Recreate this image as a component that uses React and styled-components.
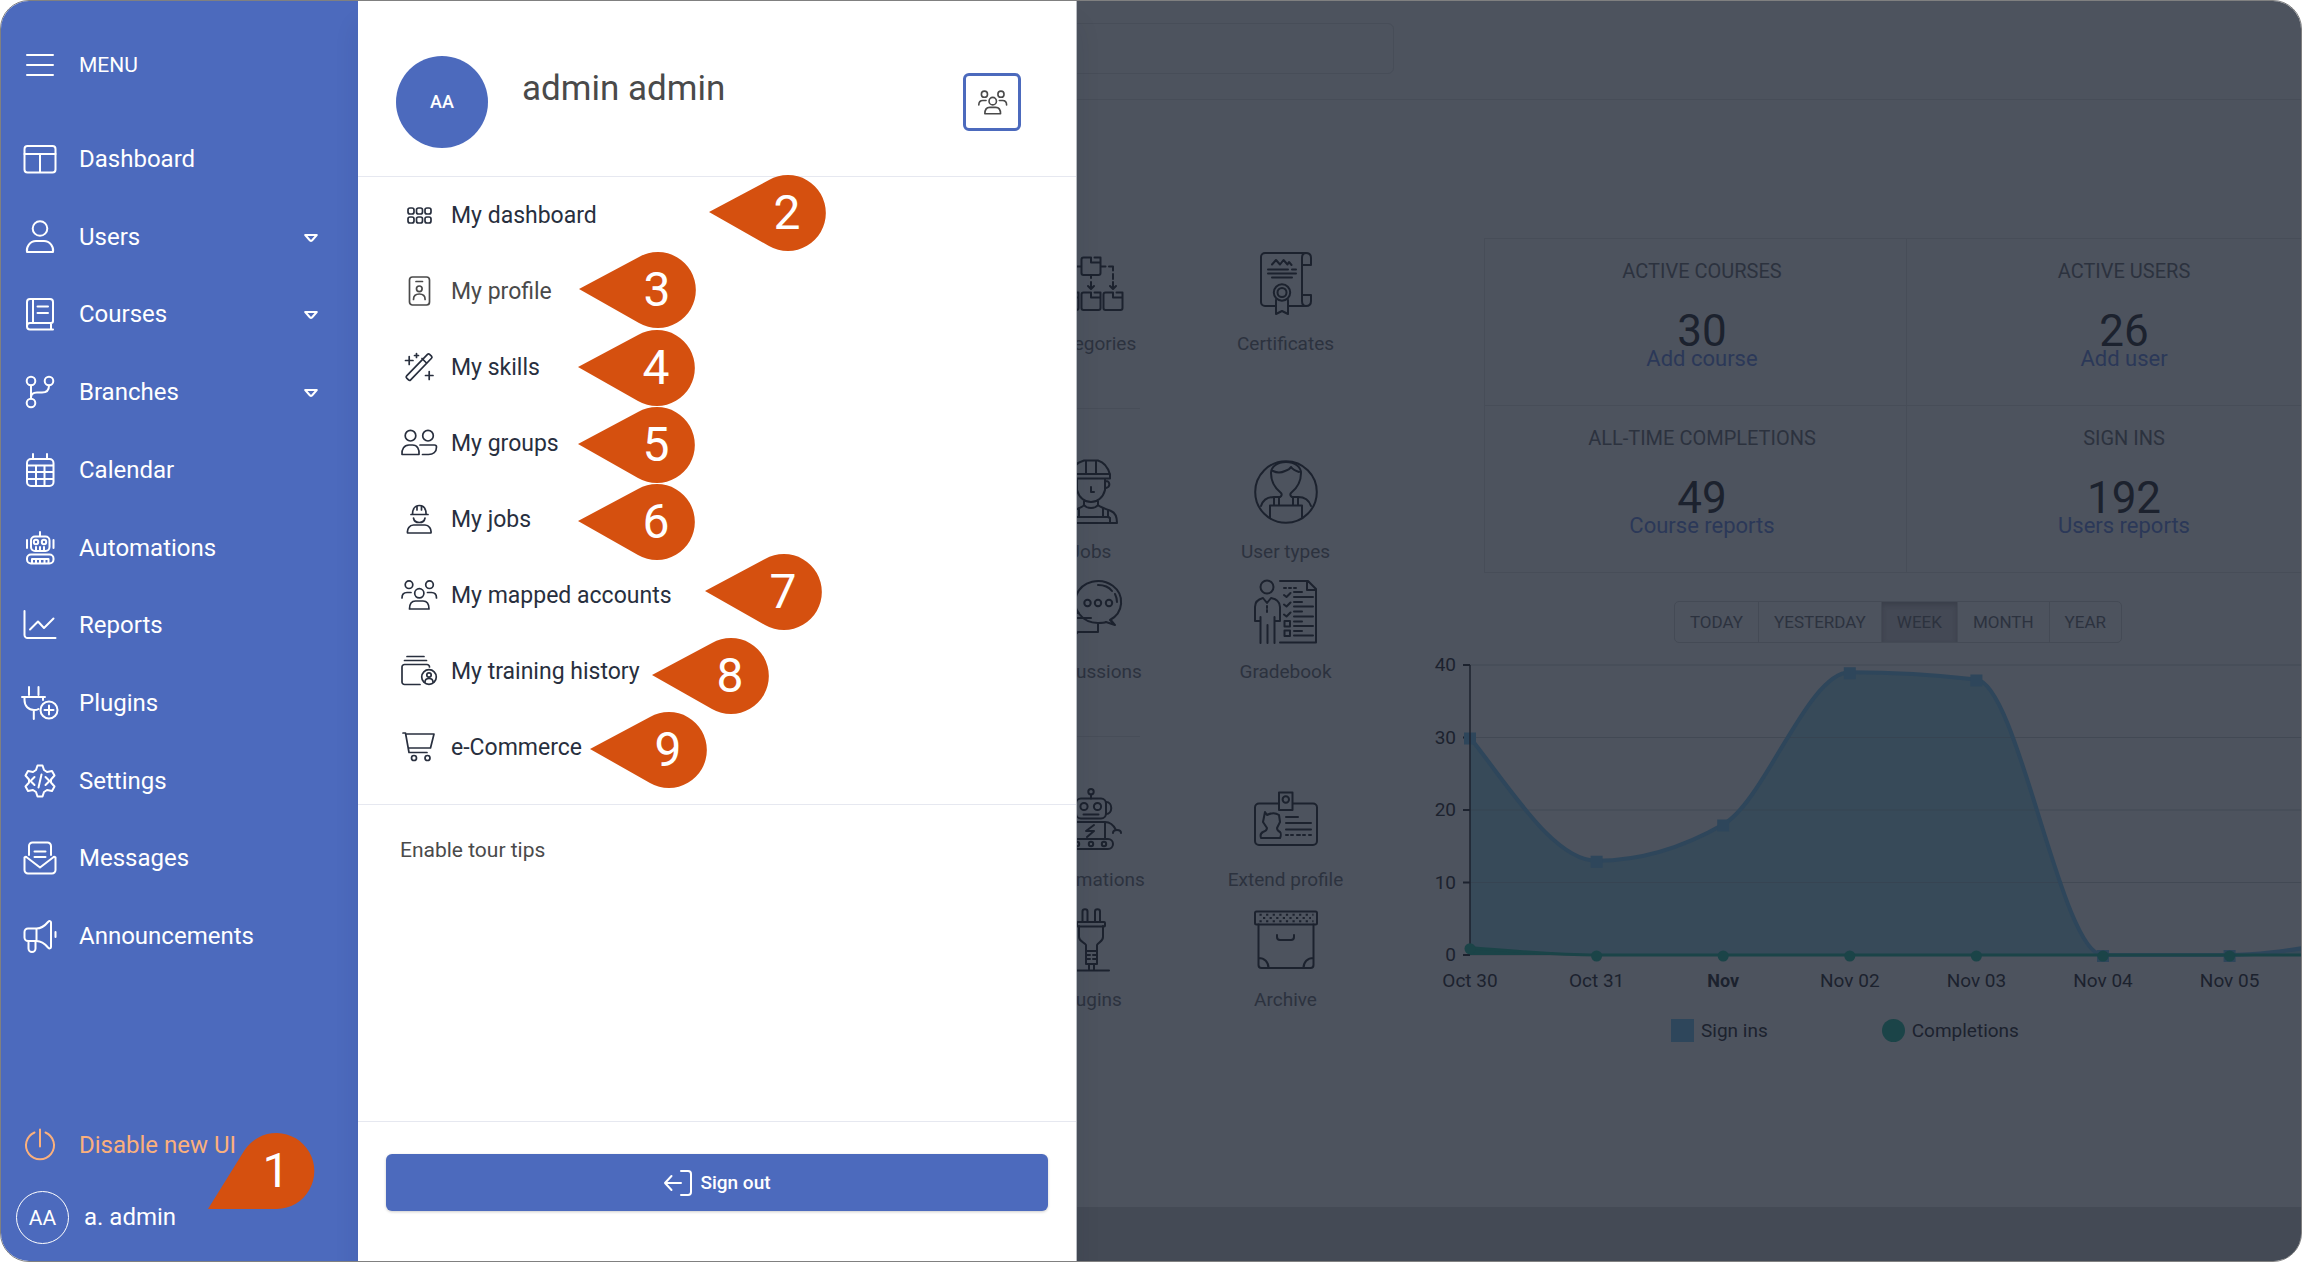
import React from 'react'
import styled, { createGlobalStyle, css } from 'styled-components';

const COLORS = {
    primary: '#4c6abd',
    callout: '#d5500f',
    warning: '#fbb07c',
    text: '#282f3e',
    muted: '#4a4a4a',
    line: '#e6e8f0',
    page: '#4d535e',
    pageLine: '#474d58',
    pageFooter: '#444a55',
    pageText: '#2c323e',
    pageInk: '#1c222e',
    pageLink: '#2b3858',
    signIns: '#2e465b',
    signInsArea: '#374a59',
    completions: '#1b4448',
}

const GlobalStyle = createGlobalStyle`
    * { box-sizing: border-box; }
    body {
        margin: 0;
        background: #fff;
        font-family: Roboto, "Liberation Sans", sans-serif;
    }
    ul { list-style: none; margin: 0; padding: 0; }
    a { color: inherit; text-decoration: none; }
    button { font: inherit; color: inherit; background: none; border: 0; padding: 0; cursor: pointer; }
`;

/* ---------- icons ---------- */

const navIcons = {
    menu: <path d="M5 8h26M5 18h26M5 28h26" />,
    dashboard: <><rect x="2.5" y="5" width="31" height="26.5" rx="3" /><path d="M2.5 13h31M18 13v18" /></>,
    users: <><circle cx="18" cy="9.5" r="7.3" /><path d="M5 33c-1-5 3-11 9-11h8c6 0 10 6 9 11z" /></>,
    courses: <path d="M31 33.5H8a3 3 0 0 1-3-3V6a3 3 0 0 1 3-3h20a3 3 0 0 1 3 3v19a2 2 0 0 1-2 2H8a3 3 0 0 0-3 3M11 3v24M29 27v6M15.500 10.500h10.500M15.500 17h10.500" />,
    branches: <><circle cx="9" cy="7" r="4.300" /><circle cx="27" cy="7" r="4.300" /><circle cx="9" cy="29" r="4.300" /><path d="M9 11.500v13M27 11.500c0 5-3 7-7 7h-5c-4 0-6 2-6 5" /></>,
    calendar: <><rect x="5" y="7" width="26.500" height="27" rx="4" /><path d="M11 2v5M25 2v5M5 13.500h26M5 20h26M5 27h26M14 13.500V34M22.500 13.500V34" /></>,
    automations: <><rect x="9" y="6.500" width="18.500" height="14.500" rx="4" /><path d="M18 2v4M5 10v8M31.500 10v8M14 17v4M18 17v4M22 17v4" /><circle cx="14" cy="12" r="2.200" /><circle cx="22" cy="12" r="2.200" /><rect x="5" y="24.500" width="26.500" height="9" rx="4" /><path d="M10 33v-4h16.500v4M14 29v4M18 29v4M22.500 29v4" /></>,
    reports: <path d="M2.500 4v24a3 3 0 0 0 3 3h28M8 22.500l8-8 6 6.500 9.500-9.500" />,
    plugins: <><path d="M7 2v8M16.500 2v8M0 12h23M2.500 12v3c0 6 4 10 9.500 10 2 0 3 0 4.500-1M11.800 25v9M21 12v3" /><circle cx="27" cy="25" r="8.500" /><path d="M22.500 25h9M27 20.500v9" /></>,
    settings: <path d="M15.500 2.500h5l1.500 4.500 3 2 5-1 2.500 4.500-3.500 4v3l3.500 4-2.500 4.500-5-1-3 2-1.500 4.500h-5L14 29l-3-2-5 1-2.500-4.500 3.500-4v-3l-3.500-4L6 8l5 1 3-2zM12.500 14l-4 4 4 4M23.500 14l4 4-4 4M19.500 11.500l-3 13" />,
    messages: <path d="M7 15V6a3.500 3.500 0 0 1 3.500-3.500h15A3.500 3.500 0 0 1 29 6v9M12.500 11.500h11M12.500 17h11M2.500 17.500c1-1 2-.500 2.500 0l13 10 13-10c.500-.500 1.500-1 2.500 0V30a3.500 3.500 0 0 1-3.500 3.500H6A3.500 3.500 0 0 1 2.500 30z" />,
    announcements: <path d="M14.500 10.500H6A3.500 3.500 0 0 0 2.500 14v5.500A3.500 3.500 0 0 0 6 23h8.500zc5 0 9-3.500 11.500-6.500 1.500-1.500 3-1 3 .500v24.500c0 1.500-1.500 2-3 .500-2.500-3-6.500-6.500-11.500-6.500M6.500 23v7.500a3.500 3.500 0 0 0 7 0V23M33.500 14v5" />,
    power: <path d="M18 2.500v17M12.500 5.500a14 14 0 1 0 11 0" />,
}

const drawerIcons = {
    dashboard: <>{[7, 15.500, 24].map((x) => [11, 20].map((y) => <rect key={`${x}-${y}`} x={x} y={y} width="6" height="6" rx="2" />))}</>,
    profile: <><rect x="8.500" y="4" width="20" height="28" rx="3" /><path d="M15 8.500h6.500M12.500 26.500c0-4 2.500-5.500 5.800-5.500s5.800 1.500 5.800 5.500" /><circle cx="18.300" cy="15.800" r="2.800" /></>,
    skills: <><rect x="1.500" y="15.300" width="33" height="5.600" rx="1.500" transform="rotate(-46 18 18)" /><path d="M21 9.500l4.500 4.500M4.500 11.500h7.500M8.200 7.500v8M13.500 6.500h4M15.500 4.500v4M24.500 26.500h7.500M28.200 22.500v8" /></>,
    groups: <><circle cx="9.500" cy="10.700" r="5.300" /><circle cx="27" cy="10.700" r="5.300" /><path d="M1 29.500c-.500-5 2-9.500 7-9.500h3.500c5 0 7 4.500 6.500 9.500zM19 20h14.500c1.500 0 2 .800 2 2 0 5-3.500 7.500-8 7.500h-6" /></>,
    jobs: <path d="M10 13.500h17M11.500 13.500c0-5 2-9 6.800-9s6.800 4 6.800 9M16 5v4M20.500 5v4M12.500 17c1 6 10.500 6 11.500 0M6.500 32c-.500-4 2-8 6-8H24c4 0 6.500 4 6 8z" />,
    mapped: <><circle cx="8" cy="7.700" r="3.800" /><circle cx="28.500" cy="7.700" r="3.800" /><circle cx="18.300" cy="16.300" r="4.600" /><path d="M1 21c0-4 2-5.500 5-5.500h4M35.500 21c0-4-2-5.500-5-5.500h-4M8.500 32c0-5 1.500-8 6-8h7.500c4.500 0 6 3 6 8z" /></>,
    history: <><path d="M6 3.500h17M3.500 7.500h22M19 31.500H3.500a2.500 2.500 0 0 1-2.500-2.500V14a2.500 2.500 0 0 1 2.500-2.500H26a2.500 2.500 0 0 1 2.500 2.500" /><circle cx="28" cy="24" r="7.300" /><circle cx="28" cy="22" r="2.200" /><path d="M24 29c0-3 2-3.500 4-3.500s4 .500 4 3.500" /></>,
    cart: <><path d="M2 4h2.500L8 23.500h18M6 5h27l-3.500 14H8" /><circle cx="13" cy="29" r="2.500" /><circle cx="26.500" cy="29" r="2.500" /></>,
}

const folder = (x, y) => (
    <path key={`${x}-${y}`} d={`M${x + 9.500} ${y}H${x + 2}a2 2 0 0 0-2 2v13.500a2 2 0 0 0 2 2h15a2 2 0 0 0 2-2V${y}h-6M${x + 9.500} ${y}v5h9`} />
)

const tileIcons = {
    categories: <>
        {folder(22.500, 5.500)}{folder(0.500, 40.500)}{folder(22.500, 40.500)}{folder(44.500, 40.500)}
        <path d="M42 14.500h4.500M50 14.500h4v4M54 22v5M54 30v6M10 14.500h4.500M18 14.500h4M10 14.500v4M10 22v5M10 30v6M32 23v3M32 30v6M29 34l3 3 3-3M51 34l3 3 3-3M7 34l3 3 3-3" />
    </>,
    certificates: <>
        <path d="M22 54H11a4 4 0 0 1-4-4V5a4 4 0 0 1 4-4h41c3 0 5 2 5 5v7h-9V6c0-3 1-5 4-5M48 13v30h9v6c0 3-2 5-5 5s-4-2-4-5v-6M52 54H34M18 12.500L22 8l4 4.500L29.500 8l4 4.500 1.500-2.500 2.500 3M14 17.500h20M38 17.500h4M14 21.500h28M18 25.500h20M22 48v14l6-3 6 3V48" />
        <circle cx="28" cy="40.500" r="8.200" /><circle cx="28" cy="40.500" r="4.500" />
    </>,
    jobs: <>
        <path d="M12 18.500v-4c1-7 6-12 13-14h14c7 2 10 7 12 14v4zM12 14h39M27 1v13M37 1v13M18 19v11c2 8 8 12 14 12s12-4 14-12V19M46 21c5-1 6 6 1 7M32 27v5h3M25 41v4c-2 3-8 4-12 6-5 2-6 7-6 12h51c0-5-1-10-6-12-4-2-10-3-13-6v-4M25 45c3 4 11 4 14 0M14 57h36M20 48v9M44 48v9M49 51v6l2 1v4" />
    </>,
    userTypes: <>
        <circle cx="32" cy="32" r="30.800" />
        <path d="M17 13c0-6 6-11 15-11s15 5 15 11c0 10-5 16-10 20-1 1-1 3 1 4h6c6 0 11 3 13 9M17 13c0 10 5 16 10 20 1 1 1 3-1 4h-6c-6 0-11 3-13 9M19 11c4 2 8 2 12 0 3-1 5-2 6-4 2 3 5 4 8 5M16 58V45.500h32V58M20 37v8M25 37v8M39 37v8M44 37v8" />
    </>,
    discussions: <>
        <path d="M51 40a23 21 0 1 0-12 3c4 0 6 0 8-1l9 3zM52 40l4 5M39 5c6 0 11 2 14 6M56 14c1 2 2 5 2 8M39 43v9H19l-8 8v-8H2V10h14M8 38h24M8 33h12" />
        <circle cx="28.500" cy="23" r="3.200" /><circle cx="39" cy="23" r="3.200" /><circle cx="50" cy="23" r="3.200" />
    </>,
    gradebook: <>
        <circle cx="13" cy="7" r="6.500" />
        <path d="M6.500 63V41H1V27c0-6 4-8 8-9l4 5 4-5c5 1 9 3 9 9v14h-5.500M20.500 37v26M6.500 37v5M13.500 45v18M13 26v2M13 30v2M26 1h28l8 8v53.500H26M53 1v9h9M30 8h2M35 8h2M40 8h2M40 12h8M40 17h19M40 22h8M40 26.500h19M40 31.500h8M40 36.500h19M40 41.500h8M40 46h19M40 51h8M40 55.500h19M30 15l2.500 2 4-4M30 24.500l2.500 2 4-4M30 34.500l2.500 2 4-4" />
        <rect x="30.500" y="41" width="5.500" height="5.500" /><rect x="30.500" y="50.500" width="5.500" height="5.500" />
    </>,
    automations: <>
        <circle cx="32" cy="3.700" r="2.700" /><rect x="17" y="10.500" width="30" height="20" rx="5" />
        <circle cx="25" cy="18.500" r="3.600" /><circle cx="38.500" cy="18.500" r="3.600" />
        <path d="M32 6.500v4M24.500 26.500h15M47 14c7 0 7 12 0 12M17 14c-7 0-7 12 0 12M17 51V34h29v17M46 34c6 0 9 4 11 8M54 45c0-4 8-4 8 0M17 34c-6 0-9 4-11 8M35 37l-8 6h8l-7 6" />
        <rect x="10" y="51" width="44" height="10" rx="5" />
        <circle cx="18" cy="56" r="2.200" /><circle cx="32" cy="56" r="2.200" /><circle cx="45" cy="56" r="2.200" />
    </>,
    extendProfile: <>
        <path d="M25 15.500H5a4 4 0 0 0-4 4V53a4 4 0 0 0 4 4h54a4 4 0 0 0 4-4V19.500a4 4 0 0 0-4-4H38.500M25 4.500h13.500V22H25zM32 29h12M32 35h25M32 41.500h25M32 47h2M37 47h2M43 47h3M49 47h2M55 47h2M11 24l2 3c4-2 9-2 12 0l1 7-3 6c0 2 1 3 3 4 1 1 1 4 0 6H7c-1-3 0-5 2-6 3-1 4-2 4-4l-4-6z" />
        <circle cx="31.800" cy="11.500" r="3.200" />
    </>,
    plugins: <>
        <path d="M23.500 14V3.500c0-3 5-3 5 0V14M36 14V3.500c0-3 5-3 5 0V14M20 18v11c0 5 6 5 7 8v6M44 18v11c0 5-5 5-6 8v6M27 43h11v13H27zM27 47h4M34 47h4M27 51h4M34 51h4M30 57v5M35 57v5M14 62.500h36" />
        <rect x="18" y="14" width="28" height="4.500" rx="1" />
    </>,
    archive: <>
        <rect x="1" y="3.500" width="62" height="13" rx="1.500" />
        <path d="M4.500 16.500V57a3 3 0 0 0 3 3h49a3 3 0 0 0 3-3V16.500M23 27v2a3 3 0 0 0 3 3h11a3 3 0 0 0 3-3v-2M4.500 50c6 0 10 4 10 10M59.500 50c-6 0-10 4-10 10" />
        <path strokeLinecap="butt" strokeDasharray="2.200 4.400" d="M5.500 6.800h54M5.500 13.300h54M9 10h48" />
    </>,
}

const Glyph = styled.svg`
    flex: none;
    display: block;
    width: ${(props) => props.$size || 36}px;
    height: ${(props) => props.$size || 36}px;
    fill: none;
    stroke: currentColor;
    stroke-width: ${(props) => props.$stroke || 2};
    stroke-linecap: round;
    stroke-linejoin: round;
    overflow: visible;
`;

const Icon = ({ box = 36, size, stroke, children }) => (
    <Glyph viewBox={`0 0 ${box} ${box}`} $size={size} $stroke={stroke} aria-hidden="true">{ children }</Glyph>
)

/* ---------- callouts ---------- */

const CalloutBox = styled.span`
    position: absolute;
    left: ${(props) => props.$left}px;
    top: ${(props) => props.$top}px;
    width: ${(props) => (props.$corner ? 107 : 117)}px;
    height: 76px;
    padding-left: ${(props) => (props.$corner ? 29 : 39)}px;
    font-size: 48px;
    line-height: 76px;
    text-align: center;
    color: #fff;
    z-index: 2;
    pointer-events: none;
`;

const CalloutShape = styled.svg`
    position: absolute;
    inset: 0;
    width: 100%;
    height: 100%;
    fill: ${COLORS.callout};
`;

const CalloutNumber = styled.span`
    position: relative;
`;

const Callout = ({ number, left, top, corner }) => (
    <CalloutBox $left={left} $top={top} $corner={corner}>
        <CalloutShape viewBox={corner ? '0 0 107 76' : '0 0 117 76'} aria-hidden="true">
            <path d={corner ? 'M0 76L36 18A38 38 0 1 1 69 76Z' : 'M0 37L60 5A38 38 0 1 1 60 71Z'} />
        </CalloutShape>
        <CalloutNumber>{ number }</CalloutNumber>
    </CalloutBox>
)

/* ---------- sidebar ---------- */

const navItems = [
    { icon: 'dashboard', label: 'Dashboard' },
    { icon: 'users', label: 'Users', expandable: true },
    { icon: 'courses', label: 'Courses', expandable: true },
    { icon: 'branches', label: 'Branches', expandable: true },
    { icon: 'calendar', label: 'Calendar' },
    { icon: 'automations', label: 'Automations' },
    { icon: 'reports', label: 'Reports' },
    { icon: 'plugins', label: 'Plugins' },
    { icon: 'settings', label: 'Settings' },
    { icon: 'messages', label: 'Messages' },
    { icon: 'announcements', label: 'Announcements' },
]

const Sidebar = () => (
    <SidebarColumn>
        <MenuButton type="button"><Icon>{ navIcons.menu }</Icon>MENU</MenuButton>
        <Nav>
            { navItems.map(({ icon, label, expandable }) => (
                <NavItem key={label}>
                    <NavLink href="#">
                        <Icon>{ navIcons[icon] }</Icon>
                        { label }
                        { expandable && <Caret viewBox="0 0 14 8" aria-hidden="true"><path d="M1.200 1h11.600L8 6.500q-1 .8-2 0z" /></Caret> }
                    </NavLink>
                </NavItem>
            )) }
        </Nav>
        <DisableButton type="button"><Icon>{ navIcons.power }</Icon>Disable new UI</DisableButton>
        <AccountRow>
            <AccountButton type="button"><Initials>AA</Initials>a. admin</AccountButton>
            <Callout number={1} left={207} top={-56} corner />
        </AccountRow>
    </SidebarColumn>
)

const SidebarColumn = styled.aside`
    display: flex;
    flex-direction: column;
    padding: 39px 0 16px;
    background: ${COLORS.primary};
    color: #fff;
    font-size: 24px;
`;

const sidebarRow = css`
    display: flex;
    align-items: center;
    gap: 21px;
    padding-left: 21px;
`;

const MenuButton = styled.button`
    ${sidebarRow}
    height: 50px;
    margin-bottom: 30px;
    font-size: 21px;
`;

const Nav = styled.ul`
    flex: 1;
    display: flex;
    flex-direction: column;
`;

const NavItem = styled.li`
    flex: 1;
    display: flex;
`;

const NavLink = styled.a`
    ${sidebarRow}
    flex: 1;
`;

const Caret = styled.svg`
    flex: none;
    width: 14px;
    height: 8px;
    margin: 2px 40px 0 auto;
    fill: none;
    stroke: currentColor;
    stroke-width: 2;
    stroke-linejoin: round;
`;

const DisableButton = styled.button`
    ${sidebarRow}
    height: 56px;
    margin: 142px 0 16px;
    color: ${COLORS.warning};
`;

const AccountRow = styled.div`
    position: relative;
`;

const AccountButton = styled.button`
    display: flex;
    align-items: center;
    gap: 15px;
    height: 56px;
    padding-left: 15px;
`;

const Initials = styled.span`
    width: 53px;
    height: 53px;
    border: 1px solid #fff;
    border-radius: 50%;
    font-size: 21px;
    line-height: 52px;
    text-align: center;
`;

/* ---------- account drawer ---------- */

const drawerItems = [
    { icon: 'dashboard', label: 'My dashboard', left: 351, top: -2 },
    { icon: 'profile', label: 'My profile', left: 221, top: -1, muted: true },
    { icon: 'skills', label: 'My skills', left: 220, top: 1 },
    { icon: 'groups', label: 'My groups', left: 220, top: 2 },
    { icon: 'jobs', label: 'My jobs', left: 220, top: 3 },
    { icon: 'mapped', label: 'My mapped accounts', left: 347, top: -3 },
    { icon: 'history', label: 'My training history', left: 294, top: 5 },
    { icon: 'cart', label: 'e-Commerce', left: 232, top: 3 },
]

const AccountDrawer = () => (
    <Drawer>
        <DrawerHeader>
            <Avatar>AA</Avatar>
            <DisplayName>admin admin</DisplayName>
            <SwitchButton type="button" aria-label="Switch account"><Icon size={29} stroke={2}>{ drawerIcons.mapped }</Icon></SwitchButton>
        </DrawerHeader>
        <DrawerList>
            { drawerItems.map(({ icon, label, left, top, muted }, i) => (
                <DrawerItem key={label}>
                    <DrawerLink href="#" $muted={muted}>
                        <Icon stroke={1.7}>{ drawerIcons[icon] }</Icon>
                        { label }
                    </DrawerLink>
                    <Callout number={i + 2} left={left} top={top} />
                </DrawerItem>
            )) }
        </DrawerList>
        <TourTips type="button">Enable tour tips</TourTips>
        <DrawerFooter>
            <SignOut type="button">
                <Icon size={30} box={30}><path d="M2 15h16M8.500 8L2 15l6.500 7M18 3h7a3 3 0 0 1 3 3v18a3 3 0 0 1-3 3h-7" /></Icon>
                Sign out
            </SignOut>
        </DrawerFooter>
    </Drawer>
)

// Slides out over the page, flush with the sidebar
const Drawer = styled.section`
    position: absolute;
    top: 0;
    bottom: 0;
    left: 357px;
    width: 719px;
    display: flex;
    flex-direction: column;
    background: #fff;
    border-right: 1px solid #b9bcc2;
    box-shadow: 0 24px 24px rgba(20, 28, 60, 0.09);
`;

const DrawerHeader = styled.header`
    display: flex;
    align-items: center;
    padding: 55px 55px 28px 38px;
    border-bottom: 1px solid ${COLORS.line};
`;

const Avatar = styled.div`
    width: 92px;
    height: 92px;
    border-radius: 50%;
    background: ${COLORS.primary};
    color: #fff;
    font-size: 18px;
    font-weight: 500;
    line-height: 92px;
    text-align: center;
`;

const DisplayName = styled.h1`
    align-self: flex-start;
    margin: 11px auto 0 34px;
    color: ${COLORS.muted};
    font-size: 35px;
    font-weight: 400;
    line-height: 44px;
`;

const SwitchButton = styled.button`
    display: flex;
    align-items: center;
    justify-content: center;
    width: 58px;
    height: 58px;
    border: 3px solid ${COLORS.primary};
    border-radius: 6px;
    color: ${COLORS.muted};
`;

const DrawerList = styled.ul`
    padding-bottom: 19px;
    border-bottom: 1px solid ${COLORS.line};
`;

const DrawerItem = styled.li`
    position: relative;
    height: 76px;
`;

const DrawerLink = styled.a`
    display: flex;
    align-items: center;
    gap: 14px;
    height: 100%;
    padding-left: 43px;
    color: ${(props) => (props.$muted ? COLORS.muted : COLORS.text)};
    font-size: 23px;
`;

const TourTips = styled.button`
    align-self: flex-start;
    padding: 33px 42px;
    color: ${COLORS.muted};
    font-size: 21px;
    line-height: 25px;
`;

const DrawerFooter = styled.footer`
    margin-top: auto;
    padding: 32px 28px 50px;
    border-top: 1px solid ${COLORS.line};
`;

const SignOut = styled.button`
    display: flex;
    align-items: center;
    justify-content: center;
    gap: 7px;
    width: 100%;
    height: 57px;
    border-radius: 6px;
    background: ${COLORS.primary};
    box-shadow: 0 1px 3px rgba(0, 0, 0, 0.2);
    color: #fff;
    font-size: 19px;
    font-weight: 500;
`;

/* ---------- page behind the drawer ---------- */

const tileGroups = [
    [['categories', 'Categories'], ['certificates', 'Certificates']],
    [['jobs', 'Jobs'], ['userTypes', 'User types'], ['discussions', 'Discussions'], ['gradebook', 'Gradebook']],
    [['automations', 'Automations'], ['extendProfile', 'Extend profile'], ['plugins', 'Plugins'], ['archive', 'Archive']],
]

const stats = [
    { title: 'ACTIVE COURSES', value: 30, link: 'Add course' },
    { title: 'ACTIVE USERS', value: 26, link: 'Add user' },
    { title: 'ALL-TIME COMPLETIONS', value: 49, link: 'Course reports' },
    { title: 'SIGN INS', value: 192, link: 'Users reports' },
]

const periods = ['TODAY', 'YESTERDAY', 'WEEK', 'MONTH', 'YEAR']

const days = ['Oct 30', 'Oct 31', 'Nov', 'Nov 02', 'Nov 03', 'Nov 04', 'Nov 05']
const signIns = [30, 13, 18, 39, 38, 0, 0, 2]
const completions = [1, 0, 0, 0, 0, 0, 0, 0]

const STEP = 126.600
const xOf = (i) => 40 + i * STEP
const yOf = (value) => 312 - value * 7.250

// Smooth line that never overshoots its points
const curve = (values) => {
    const slopes = values.slice(1).map((v, i) => v - values[i])
    const tangents = values.map((_, i) => {
        if (i === 0) return slopes[0] * 1.300
        if (i === values.length - 1) return slopes[i - 1]
        const [a, b] = [slopes[i - 1], slopes[i]]
        return a * b <= 0 ? 0 : Math.sign(a) * Math.min(Math.abs(a), Math.abs(b), Math.abs(a + b) / 4) * 2
    })
    return values.reduce((d, v, i) => {
        if (i === 0) return `M${xOf(0)} ${yOf(v)}`
        const c1 = `${xOf(i - 1) + STEP / 3} ${yOf(values[i - 1] + tangents[i - 1] / 3)}`
        const c2 = `${xOf(i) - STEP / 3} ${yOf(v - tangents[i] / 3)}`
        return `${d}C${c1} ${c2} ${xOf(i)} ${yOf(v)}`
    }, '')
}
const area = (values) => `${curve(values)}V${yOf(0)}H${xOf(0)}Z`

const Chart = () => (
    <ChartSvg viewBox="0 0 899 350" role="img" aria-label="Sign ins and completions">
        <path d={area(signIns)} fill={COLORS.signInsArea} />
        { [0, 10, 20, 30, 40].map((v) => (
            <g key={v}>
                <path d={`M40 ${yOf(v)}H899`} stroke="#363e4a" strokeOpacity="0.45" />
                <path d={`M33 ${yOf(v)}h7`} stroke={COLORS.pageInk} strokeWidth="2" />
                <AxisLabel x="26" y={yOf(v) + 6} textAnchor="end">{ v }</AxisLabel>
            </g>
        )) }
        <path d={curve(signIns)} fill="none" stroke={COLORS.signIns} strokeWidth="4" />
        { signIns.map((v, i) => <rect key={i} x={xOf(i) - 6} y={yOf(v) - 5} width="12" height="12" fill={COLORS.signIns} />) }
        <path d={`M40 22V${yOf(0)}`} stroke={COLORS.pageInk} strokeWidth="1.500" />
        <path d={area(completions)} fill={COLORS.completions} />
        <path d={curve(completions)} fill="none" stroke={COLORS.completions} strokeWidth="3" />
        { completions.map((v, i) => <circle key={i} cx={xOf(i)} cy={yOf(v) + 1} r="5.500" fill={COLORS.completions} />) }
        { days.map((day, i) => (
            <AxisLabel key={day} x={xOf(i)} y="344" textAnchor="middle" $strong={day === 'Nov'}>{ day }</AxisLabel>
        )) }
    </ChartSvg>
)

const Page = () => (
    <Main>
        <TopBar><Search type="search" aria-label="Search" /></TopBar>
        <Content>
            <Tiles>
                { tileGroups.map((group, i) => (
                    <React.Fragment key={i}>
                        { i > 0 && <TileDivider /> }
                        <TileGroup>
                            { group.map(([icon, label]) => (
                                <Tile key={label} href="#">
                                    <Icon size={64} box={64}>{ tileIcons[icon] }</Icon>
                                    <TileLabel>{ label }</TileLabel>
                                </Tile>
                            )) }
                        </TileGroup>
                    </React.Fragment>
                )) }
            </Tiles>
            <Overview>
                <Stats>
                    { stats.map(({ title, value, link }) => (
                        <Stat key={title}>
                            <StatTitle>{ title }</StatTitle>
                            <StatValue>{ value }</StatValue>
                            <StatLink href="#">{ link }</StatLink>
                        </Stat>
                    )) }
                </Stats>
                <Periods>
                    { periods.map((period) => (
                        <Period key={period} type="button" $active={period === 'WEEK'}>{ period }</Period>
                    )) }
                </Periods>
                <Chart />
                <Legend>
                    <LegendItem><Swatch $color={COLORS.signIns} />Sign ins</LegendItem>
                    <LegendItem><Swatch $color={COLORS.completions} $round />Completions</LegendItem>
                </Legend>
            </Overview>
        </Content>
        <PageFooter />
    </Main>
)

const Main = styled.main`
    display: flex;
    flex-direction: column;
    min-width: 0;
    overflow: hidden;
    background: ${COLORS.page};
    color: ${COLORS.pageText};
`;

const TopBar = styled.div`
    display: flex;
    padding: 22px 0 25px 396px;
    border-bottom: 1px solid ${COLORS.pageLine};
`;

const Search = styled.input`
    width: 640px;
    height: 51px;
    border: 1px solid ${COLORS.pageLine};
    border-radius: 6px;
    background: transparent;
    appearance: none;
`;

const Content = styled.div`
    flex: 1;
    display: flex;
`;

const Tiles = styled.section`
    flex: none;
    width: 1025px;
    padding-top: 152px;
`;

const TileGroup = styled.div`
    display: grid;
    grid-template-columns: 195px 195px;
    grid-auto-rows: 120px;
    justify-content: end;
`;

const TileDivider = styled.hr`
    height: 1px;
    margin: 36px 243px 51px 0;
    border: 0;
    background: ${COLORS.pageLine};
`;

const Tile = styled.a`
    display: flex;
    flex-direction: column;
    align-items: center;
    color: ${COLORS.pageInk};
`;

const TileLabel = styled.span`
    margin-top: 16px;
    color: ${COLORS.pageText};
    font-size: 19px;
    line-height: 24px;
`;

const Overview = styled.section`
    flex: 1;
    min-width: 0;
    margin: 138px -28px 0 47px;
`;

const Stats = styled.div`
    display: grid;
    grid-template-columns: 1fr 1fr;
    margin-left: 54px;
    border: solid ${COLORS.pageLine};
    border-width: 1px 0 0 1px;
`;

const Stat = styled.div`
    display: flex;
    flex-direction: column;
    align-items: center;
    height: 167px;
    padding: 20px 0 0 13px;
    border: solid ${COLORS.pageLine};
    border-width: 0 1px 1px 0;
`;

const StatTitle = styled.div`
    font-size: 20px;
    line-height: 24px;
`;

const StatValue = styled.div`
    margin-top: 32px;
    color: ${COLORS.pageInk};
    font-size: 44px;
    line-height: 32px;
`;

const StatLink = styled.a`
    color: ${COLORS.pageLink};
    font-size: 22px;
    line-height: 24px;
`;

const Periods = styled.div`
    display: flex;
    justify-content: center;
    margin: 28px 17px 0 55px;
`;

const Period = styled.button`
    height: 42px;
    margin-left: -1px;
    padding: 0 15px;
    border: 1px solid ${COLORS.pageFooter};
    font-size: 17px;
    ${(props) => props.$active && css`
        background: #444955;
        box-shadow: inset 0 3px 5px rgba(30, 34, 45, 0.25);
    `}
    &:first-child { border-radius: 5px 0 0 5px; }
    &:last-child { border-radius: 0 5px 5px 0; }
`;

const ChartSvg = styled.svg`
    display: block;
    width: 100%;
`;

const AxisLabel = styled.text`
    fill: ${COLORS.pageInk};
    font-size: ${(props) => (props.$strong ? 18 : 19)}px;
    font-weight: ${(props) => (props.$strong ? 700 : 400)};
`;

const Legend = styled.div`
    display: flex;
    gap: 114px;
    margin-top: 26px;
    padding-left: 241px;
    color: ${COLORS.pageInk};
    font-size: 19px;
`;

const LegendItem = styled.div`
    display: flex;
    align-items: center;
    gap: 7px;
`;

const Swatch = styled.span`
    width: 23px;
    height: 23px;
    border-radius: ${(props) => (props.$round ? '50%' : 0)};
    background: ${(props) => props.$color};
`;

const PageFooter = styled.footer`
    height: 54px;
    background: ${COLORS.pageFooter};
`;

const Frame = styled.div`
    position: relative;
    display: grid;
    grid-template-columns: 357px minmax(0, 1fr);
    min-height: 100vh;
    border: 1px solid #808080;
    border-radius: 29px;
    overflow: hidden;
`;

export default function App() {
    return (
        <>
            <GlobalStyle />
            <Frame>
                <Sidebar />
                <Page />
                <AccountDrawer />
            </Frame>
        </>
    )
}
